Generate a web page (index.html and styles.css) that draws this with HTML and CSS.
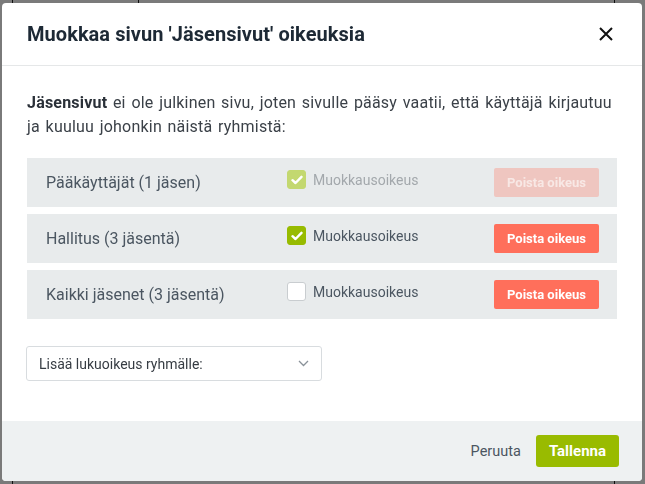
FILE: index.html
```html
<!DOCTYPE html>
<html lang="fi">
<head>
<meta charset="utf-8">
<title>Muokkaa sivun oikeuksia</title>
<link rel="stylesheet" href="styles.css">
</head>
<body>
<div class="page">
  <div class="page-tab">Etusivu</div>
</div>
<div class="overlay">
  <div class="modal">
    <div class="modal-header">
      <h2 class="modal-title">Muokkaa sivun 'Jäsensivut' oikeuksia</h2>
      <button class="close" aria-label="Sulje">
        <svg width="14" height="14" viewBox="0 0 14 14"><path d="M1 1L13 13M13 1L1 13" stroke="#111" stroke-width="2" fill="none"/></svg>
      </button>
    </div>
    <div class="modal-body">
      <p class="intro"><strong>Jäsensivut</strong> ei ole julkinen sivu, joten sivulle pääsy vaatii, että käyttäjä kirjautuu ja kuuluu johonkin näistä ryhmistä:</p>
      <div class="group-row">
        <span class="group-name">Pääkäyttäjät (1 jäsen)</span>
        <label class="check disabled">
          <span class="box checked">
            <svg width="12" height="10" viewBox="0 0 12 10"><path d="M1.5 5.2L4.5 8L10.5 1.8" stroke="#fff" stroke-width="2.4" fill="none" stroke-linecap="round" stroke-linejoin="round"/></svg>
          </span>
          <span class="check-label">Muokkausoikeus</span>
        </label>
        <button class="btn-remove disabled">Poista oikeus</button>
      </div>
      <div class="group-row">
        <span class="group-name">Hallitus (3 jäsentä)</span>
        <label class="check">
          <span class="box checked">
            <svg width="12" height="10" viewBox="0 0 12 10"><path d="M1.5 5.2L4.5 8L10.5 1.8" stroke="#fff" stroke-width="2.4" fill="none" stroke-linecap="round" stroke-linejoin="round"/></svg>
          </span>
          <span class="check-label">Muokkausoikeus</span>
        </label>
        <button class="btn-remove">Poista oikeus</button>
      </div>
      <div class="group-row">
        <span class="group-name">Kaikki jäsenet (3 jäsentä)</span>
        <label class="check">
          <span class="box"></span>
          <span class="check-label">Muokkausoikeus</span>
        </label>
        <button class="btn-remove">Poista oikeus</button>
      </div>
      <div class="select">
        <span>Lisää lukuoikeus ryhmälle:</span>
        <svg width="11" height="7" viewBox="0 0 11 7"><path d="M1 1L5.5 5.5L10 1" stroke="#8a9299" stroke-width="1.3" fill="none"/></svg>
      </div>
    </div>
    <div class="modal-footer">
      <button class="btn-cancel">Peruuta</button>
      <button class="btn-save">Tallenna</button>
    </div>
  </div>
</div>
</body>
</html>
```
FILE: styles.css
```css
html, body {
  margin: 0;
  padding: 0;
  height: 100%;
}
body {
  font-family: Roboto, "Noto Sans", sans-serif;
  background: #fff;
  overflow: hidden;
}
.page {
  height: 484px;
  position: relative;
  border-left: 1px solid #222;
  margin-left: 12px;
  width: 601px;
  border-right: 1px solid #222;
}
.page-tab {
  position: absolute;
  left: 33px;
  top: -20px;
  width: 92px;
  height: 24px;
  font-weight: 700;
  font-size: 23px;
  line-height: 24px;
  color: #111;
  border-right: 1px solid #222;
}
.overlay {
  position: fixed;
  inset: 0;
  background: rgba(0, 0, 0, 0.52);
  display: flex;
  align-items: flex-start;
}
.modal {
  margin: 3px 0 0 2px;
  width: 640px;
  height: 478px;
  background: #fff;
  border-radius: 4px;
  display: flex;
  flex-direction: column;
  overflow: hidden;
}
.modal-header {
  height: 62px;
  border-bottom: 1px solid #e5e7e8;
  display: flex;
  align-items: center;
  justify-content: space-between;
  padding: 0 29px 0 25px;
}
.modal-title {
  margin: 0;
  font-size: 20px;
  font-weight: 700;
  color: #1d2935;
  letter-spacing: 0.05px;
}
.close {
  border: 0;
  background: none;
  padding: 0;
  display: flex;
}
.modal-body {
  flex: 1;
  padding: 25px 25px 0;
}
.intro {
  margin: 0 0 19px;
  font-size: 16px;
  line-height: 24px;
  letter-spacing: 0.2px;
  word-spacing: 1.5px;
  color: #3b4148;
}
.intro strong {
  color: #2a3038;
}
.group-row {
  display: grid;
  grid-template-columns: 241px 1fr auto;
  align-items: center;
  height: 49px;
  padding: 0 18px 0 19px;
  margin-bottom: 7px;
  background: #e8ebec;
}
.group-name {
  font-size: 16px;
  color: #4b5661;
}
.check {
  display: flex;
  align-items: center;
  gap: 7px;
  margin-top: -6px;
}
.box {
  width: 17px;
  height: 17px;
  border-radius: 3px;
  background: #fff;
  border: 1px solid #c9cdd0;
  display: flex;
  align-items: center;
  justify-content: center;
}
.box.checked {
  background: #97bb00;
  border-color: #97bb00;
}
.check-label {
  font-size: 14px;
  color: #4b5661;
}
.check.disabled .box.checked {
  background: #c3d870;
  border-color: #c3d870;
}
.check.disabled .check-label {
  color: #a3a8ac;
}
.btn-remove {
  font-family: inherit;
  height: 29px;
  width: 105px;
  border: 0;
  border-radius: 2px;
  background: #ff6f5b;
  color: #fff;
  font-size: 13px;
  font-weight: 700;
}
.btn-remove.disabled {
  background: #efc6c0;
  color: #f8e8e5;
}
.select {
  margin-top: 27px;
  width: 296px;
  height: 35px;
  border: 1px solid #d8dcdf;
  border-radius: 3px;
  display: flex;
  align-items: center;
  justify-content: space-between;
  padding: 0 12px 0 12px;
  box-sizing: border-box;
  margin-left: -1px;
  font-size: 14px;
  color: #363c43;
}
.modal-footer {
  height: 60px;
  background: #eef1f2;
  display: flex;
  align-items: center;
  justify-content: flex-end;
  gap: 15px;
  padding: 0 23px;
}
.btn-cancel {
  font-family: inherit;
  border: 0;
  background: none;
  padding: 0;
  font-size: 14.5px;
  color: #4b5661;
}
.btn-save {
  font-family: inherit;
  height: 32px;
  padding: 0 13px;
  border: 0;
  border-radius: 3px;
  background: #99bb00;
  color: #fff;
  font-size: 15px;
  font-weight: 700;
}
```
